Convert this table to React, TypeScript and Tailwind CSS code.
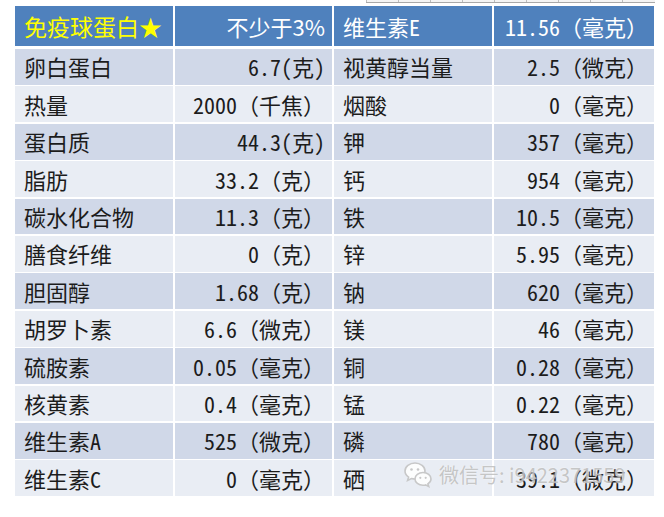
import React from "react";

const rows: [string, string, string, string][] = [
  ["卵白蛋白", "6.7(克)", "视黄醇当量", "2.5（微克）"],
  ["热量", "2000（千焦）", "烟酸", "0（毫克）"],
  ["蛋白质", "44.3(克)", "钾", "357（毫克）"],
  ["脂肪", "33.2（克）", "钙", "954（毫克）"],
  ["碳水化合物", "11.3（克）", "铁", "10.5（毫克）"],
  ["膳食纤维", "0（克）", "锌", "5.95（毫克）"],
  ["胆固醇", "1.68（克）", "钠", "620（毫克）"],
  ["胡罗卜素", "6.6（微克）", "镁", "46（毫克）"],
  ["硫胺素", "0.05（毫克）", "铜", "0.28（毫克）"],
  ["核黄素", "0.4（毫克）", "锰", "0.22（毫克）"],
  ["维生素A", "525（微克）", "磷", "780（毫克）"],
  ["维生素C", "0（毫克）", "硒", "39.1（微克）"],
];

function WeChatIcon() {
  return (
    <svg width="30" height="27" viewBox="0 0 30 27" fill="none">
      <path
        d="M12 2C6.5 2 2 5.6 2 10c0 2.5 1.4 4.6 3.6 6.1L4.6 19.5l3.8-2c1.1.3 2.3.5 3.6.5 5.5 0 10-3.6 10-8S17.5 2 12 2z"
        fill="#ffffff"
        stroke="#c4c4c4"
        strokeWidth="1.6"
      />
      <circle cx="8.5" cy="8.5" r="1.3" fill="#c4c4c4" />
      <circle cx="15" cy="8.5" r="1.3" fill="#c4c4c4" />
      <path
        d="M20 11.5c-4.4 0-8 2.9-8 6.4s3.6 6.4 8 6.4c.9 0 1.8-.1 2.6-.4l3.1 1.6-.8-2.7c1.8-1.2 3.1-3 3.1-4.9 0-3.5-3.6-6.4-8-6.4z"
        fill="#ffffff"
        stroke="#c4c4c4"
        strokeWidth="1.6"
      />
      <circle cx="17.3" cy="16.8" r="1.1" fill="#c4c4c4" />
      <circle cx="22.7" cy="16.8" r="1.1" fill="#c4c4c4" />
    </svg>
  );
}

export default function App() {
  return (
    <div className="relative w-[664px] h-[517px] bg-white overflow-hidden font-['Noto_Sans_Mono_CJK_SC','Noto_Sans_CJK_SC',monospace]">
      {/* strip of a table above */}
      <div className="ml-[366px] w-[289px] h-[3px] flex border-b border-[#a9a9a9] bg-[#f4f4f4]">
        {Array.from({ length: 9 }).map((_, i) => (
          <div key={i} className="w-[32px] h-full border-l border-[#bdbdbd]" />
        ))}
      </div>

      <div className="ml-[15px] mt-[3px] w-[639px]">
        {/* header */}
        <div className="grid grid-cols-[158px_157px_158px_160px] gap-x-[2px] h-[40px] bg-white">
          <div className="bg-[#4f81bd] flex items-center pl-[9px] text-[23px] text-[#ffff00]">
            免疫球蛋白★
          </div>
          <div className="bg-[#4f81bd] flex items-center justify-end pr-[7px] text-[22px] text-white font-['Noto_Sans_CJK_SC',sans-serif]">
            不少于3%
          </div>
          <div className="bg-[#4f81bd] flex items-center pl-[9px] text-[22px] text-white">
            维生素E
          </div>
          <div className="bg-[#4f81bd] flex items-center justify-end pr-[6px] text-[22px] text-white">
            11.56（毫克）
          </div>
        </div>

        {/* body */}
        <div className="mt-[3px] grid grid-cols-[158px_157px_158px_160px] gap-x-[2px] gap-y-[1.5px] text-[22px] text-[#1c1c1c]">
          {rows.map((r, i) => {
            const bg = i % 2 === 0 ? "bg-[#d0d8e8]" : "bg-[#e9edf4]";
            return (
              <React.Fragment key={i}>
                <div className={`${bg} h-[35.9px] flex items-center pl-[9px]`}>
                  {r[0]}
                </div>
                <div className={`${bg} h-[35.9px] flex items-center justify-end pr-[7px]`}>
                  {r[1]}
                </div>
                <div className={`${bg} h-[35.9px] flex items-center pl-[9px]`}>
                  {r[2]}
                </div>
                <div className={`${bg} h-[35.9px] flex items-center justify-end pr-[6px]`}>
                  {r[3]}
                </div>
              </React.Fragment>
            );
          })}
        </div>
      </div>

      {/* watermark */}
      <div className="absolute left-[403px] top-[461px] flex items-center gap-[6px] opacity-90">
        <WeChatIcon />
        <span className="text-[20px] leading-none text-[#c2c2c2] font-['Noto_Sans_CJK_SC',sans-serif] [text-shadow:0_0_2px_#ffffff]">
          微信号: i9422371559
        </span>
      </div>
    </div>
  );
}
